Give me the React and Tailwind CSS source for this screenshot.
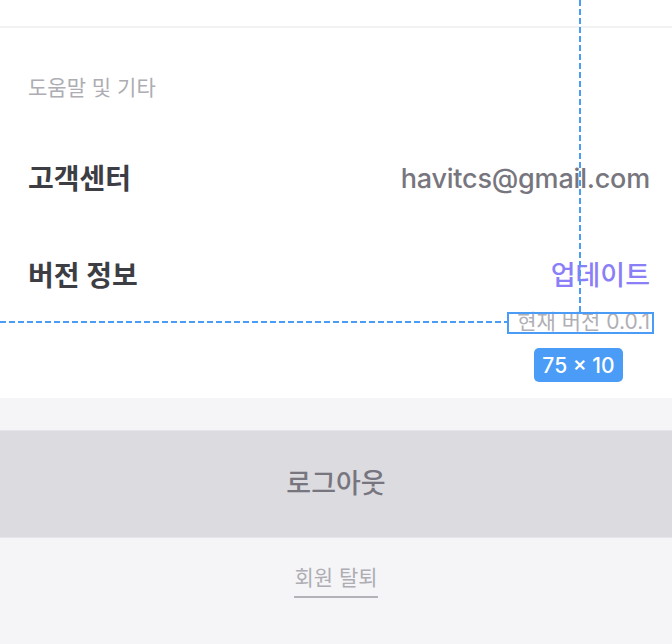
import React from "react";

const font = { fontFamily: '"Inter", "Noto Sans CJK KR", sans-serif' };

function Guides() {
  return (
    <>
      {/* vertical guide */}
      <svg className="absolute left-[579px] top-0" width="2" height="312">
        <line x1="1" y1="0" x2="1" y2="312" stroke="#4a9cf6" strokeWidth="2" strokeDasharray="6 3" />
      </svg>
      {/* horizontal guide */}
      <svg className="absolute left-0 top-[321px]" width="507" height="2">
        <line x1="0" y1="1" x2="507" y2="1" stroke="#4a9cf6" strokeWidth="2" strokeDasharray="6 3" />
      </svg>
      {/* selection box */}
      <div className="absolute left-[507px] top-[312px] w-[147px] h-[22px] border-2 border-[#4a9cf6]" />
      {/* size badge */}
      <div className="absolute left-[534px] top-[348px] w-[89px] h-[34px] rounded-[5px] bg-[#4a9cf6] flex items-center justify-center text-white text-[21px] font-medium leading-none">
        75 × 10
      </div>
    </>
  );
}

export default function App() {
  return (
    <div className="relative w-[672px] h-[644px] overflow-hidden bg-[#f5f5f7]" style={font}>
      <div className="h-[26px] bg-white" />
      <div className="h-[2px] bg-[#f2f2f4]" />
      <section className="bg-white pl-[28px] pr-[22px] pt-[48px] pb-[64px]">
        <div className="text-[21px] leading-[24px] text-[#aeadb3]">도움말 및 기타</div>
        <div className="mt-[61px] flex items-center justify-between h-[36px]">
          <span className="text-[28px] font-bold text-[#3d3d44]">고객센터</span>
          <span className="text-[27px] font-medium text-[#77767e] tracking-[-0.2px]">havitcs@gmail.com</span>
        </div>
        <div className="mt-[61px] flex items-center justify-between h-[36px]">
          <span className="text-[28px] font-bold text-[#3d3d44]">버전 정보</span>
          <span className="text-[27px] font-medium text-[#8b7ff8]">업데이트</span>
        </div>
        <div className="mt-[16px] flex justify-end">
          <span className="text-[21px] leading-[24px] text-[#b0afb5]">현재 버전 0.0.1</span>
        </div>
      </section>
      <div className="h-[32px]" />
      <button className="w-full h-[108px] bg-[#dcdbe0] border-y border-[#e6e6ea] flex items-center justify-center text-[27px] font-medium text-[#77767e]">
        로그아웃
      </button>
      <div className="flex justify-center pt-[28px]">
        <span className="text-[21px] leading-[24px] text-[#aeadb3] border-b-2 border-[#b3b2b8] pb-[6px]">회원 탈퇴</span>
      </div>
      <Guides />
    </div>
  );
}
